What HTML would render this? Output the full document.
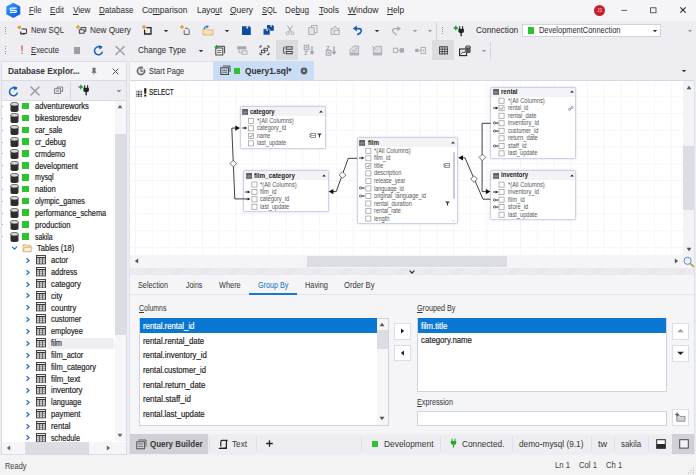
<!DOCTYPE html><html><head><meta charset="utf-8"><title>Query1.sql</title><style>
*{margin:0;padding:0;box-sizing:border-box}
html,body{width:696px;height:475px;overflow:hidden;background:#eeeef2}
body{position:relative;font-family:"Liberation Sans",sans-serif;font-size:9px;color:#1e1e1e}
.a{position:absolute}
.t{position:absolute;white-space:nowrap;transform-origin:0 50%;line-height:12px;height:12px;-webkit-text-stroke:0.2px currentColor}
.s{font-size:9.3px;color:#333;-webkit-text-stroke:0.05px currentColor}
.h{font-size:8.7px;color:#222;-webkit-text-stroke:0.18px currentColor}
.d{font-size:6.7px;color:#56565a;-webkit-text-stroke:0}
.g{-webkit-text-stroke:0.05px currentColor}
.b{font-weight:bold}
.w{color:#fff}
u{text-decoration:underline;text-underline-offset:0.6px;text-decoration-thickness:0.5px}
</style></head><body>
<div class="a" style="left:0px;top:0px;width:696px;height:21px;background:#f5f5f7"></div>
<svg class="a" style="left:5px;top:2px" width="17" height="17" viewBox="0 0 17 17"><defs><linearGradient id="lg" x1="0" y1="0" x2="1" y2="1"><stop offset="0" stop-color="#35a2ff"/><stop offset="1" stop-color="#0a55dd"/></linearGradient></defs><path d="M8.3 0.7 L15.3 4.5 L15.3 12.2 L8.3 16 L1.3 12.2 L1.3 4.5 Z" fill="url(#lg)"/><path d="M11.6 6.2 H6.4 Q5.1 6.2 5.1 7.25 Q5.1 8.3 6.4 8.3 H10.2 Q11.5 8.3 11.5 9.35 Q11.5 10.4 10.2 10.4 H5" fill="none" stroke="#fff" stroke-width="1.2"/></svg>
<div class="t s" style="left:29px;top:3.8px;transform:scaleX(0.834);"><u>F</u>ile</div>
<div class="t s" style="left:50px;top:3.8px;transform:scaleX(0.874);"><u>E</u>dit</div>
<div class="t s" style="left:73px;top:3.8px;transform:scaleX(0.875);"><u>V</u>iew</div>
<div class="t s" style="left:99px;top:3.8px;transform:scaleX(0.867);"><u>D</u>atabase</div>
<div class="t s" style="left:142px;top:3.8px;transform:scaleX(0.907);">Co<u>m</u>parison</div>
<div class="t s" style="left:197px;top:3.8px;transform:scaleX(0.895);">Layo<u>u</u>t</div>
<div class="t s" style="left:230px;top:3.8px;transform:scaleX(0.908);"><u>Q</u>uery</div>
<div class="t s" style="left:262px;top:3.8px;transform:scaleX(0.806);"><u>S</u>QL</div>
<div class="t s" style="left:285px;top:3.8px;transform:scaleX(0.876);">De<u>b</u>ug</div>
<div class="t s" style="left:319px;top:3.8px;transform:scaleX(0.921);"><u>T</u>ools</div>
<div class="t s" style="left:348px;top:3.8px;transform:scaleX(0.922);"><u>W</u>indow</div>
<div class="t s" style="left:387px;top:3.8px;transform:scaleX(0.889);"><u>H</u>elp</div>
<div class="a" style="left:594px;top:5px;width:11px;height:11px;background:#c4202f;border-radius:50%"></div>
<div class="t s" style="left:597px;top:4.6px;font-size:4.5px;color:#f0b8bd">JS</div>
<svg class="a" style="left:618px;top:4px" width="12" height="12" viewBox="0 0 12 12"><path d="M3.4 6.4H9" stroke="#3a3a3a" stroke-width="0.8"/></svg>
<svg class="a" style="left:647px;top:4px" width="12" height="12" viewBox="0 0 12 12"><rect x="3.6" y="3.8" width="5.4" height="5" fill="none" stroke="#3a3a3a" stroke-width="0.8"/></svg>
<svg class="a" style="left:676.8px;top:4.3px" width="12" height="12" viewBox="0 0 12 12"><path d="M3.3 3.3L8.7 8.7M8.7 3.3L3.3 8.7" stroke="#2a2a2a" stroke-width="1.1"/></svg>
<div class="a" style="left:0px;top:21px;width:696px;height:41px;background:#eeeef2"></div>
<div class="a" style="left:5px;top:26.5px;width:1px;height:1px;background:#8e8e96"></div>
<div class="a" style="left:5px;top:28.8px;width:1px;height:1px;background:#8e8e96"></div>
<div class="a" style="left:5px;top:31.1px;width:1px;height:1px;background:#8e8e96"></div>
<div class="a" style="left:5px;top:33.4px;width:1px;height:1px;background:#8e8e96"></div>
<div class="a" style="left:5px;top:46.0px;width:1px;height:1px;background:#8e8e96"></div>
<div class="a" style="left:5px;top:48.3px;width:1px;height:1px;background:#8e8e96"></div>
<div class="a" style="left:5px;top:50.6px;width:1px;height:1px;background:#8e8e96"></div>
<div class="a" style="left:5px;top:52.9px;width:1px;height:1px;background:#8e8e96"></div>
<div class="a" style="left:442px;top:26.5px;width:1px;height:1px;background:#8e8e96"></div>
<div class="a" style="left:442px;top:28.8px;width:1px;height:1px;background:#8e8e96"></div>
<div class="a" style="left:442px;top:31.1px;width:1px;height:1px;background:#8e8e96"></div>
<div class="a" style="left:442px;top:33.4px;width:1px;height:1px;background:#8e8e96"></div>
<svg class="a" style="left:16px;top:23.8px" width="12" height="12" viewBox="0 0 12 12"><path d="M3.4 1.0L4.39 2.21L5.6 3.2L4.39 4.19L3.4 5.4L2.4099999999999997 4.19L1.1999999999999997 3.2L2.4099999999999997 2.21Z" fill="#e8a33d"/><circle cx="3.4" cy="3.2" r="1.54" fill="#e8a33d"/><path d="M5.6 5H10.4V9.4H6.4" fill="#f8f8fa" stroke="#2a2a2a" stroke-width="1"/><path d="M4.8 7.6V9.9H8.8" fill="none" stroke="#2a2a2a" stroke-width="1.1"/></svg>
<div class="t s" style="left:31px;top:23.9px;transform:scaleX(0.829);">New SQL</div>
<svg class="a" style="left:75px;top:23.8px" width="12" height="12" viewBox="0 0 12 12"><path d="M3 0.7999999999999998L3.99 2.01L5.2 3L3.99 3.99L3 5.2L2.01 3.99L0.7999999999999998 3L2.01 2.01Z" fill="#e8a33d"/><circle cx="3" cy="3" r="1.54" fill="#e8a33d"/><rect x="6" y="3.6" width="4.8" height="3.6" fill="#eeeef2" stroke="#333" stroke-width="0.9"/><rect x="4.3" y="5.8" width="4.8" height="3.4" fill="#eeeef2" stroke="#333" stroke-width="0.9"/></svg>
<div class="t s" style="left:89.5px;top:23.9px;transform:scaleX(0.881);">New Query</div>
<svg class="a" style="left:141px;top:23.8px" width="12" height="12" viewBox="0 0 12 12"><path d="M3 0.7999999999999998L3.99 2.01L5.2 3L3.99 3.99L3 5.2L2.01 3.99L0.7999999999999998 3L2.01 2.01Z" fill="#e8a33d"/><circle cx="3" cy="3" r="1.54" fill="#e8a33d"/><path d="M5.5 3.6H10V10H3.6V5.8" fill="none" stroke="#222" stroke-width="1.3"/></svg>
<svg class="a" style="left:162px;top:27.5px" width="8" height="6" viewBox="0 0 8 6"><path d="M1.7 2.0H6.3L4 4.3Z" fill="#333"/></svg>
<svg class="a" style="left:179px;top:23.8px" width="12" height="12" viewBox="0 0 12 12"><path d="M3 0.7999999999999998L3.99 2.01L5.2 3L3.99 3.99L3 5.2L2.01 3.99L0.7999999999999998 3L2.01 2.01Z" fill="#e8a33d"/><circle cx="3" cy="3" r="1.54" fill="#e8a33d"/><path d="M6 4.3H8.6L10.2 6V10.4H5.2V6" fill="none" stroke="#444" stroke-width="0.8"/></svg>
<svg class="a" style="left:201px;top:23.8px" width="14" height="12" viewBox="0 0 14 12"><path d="M2 5H6L7 6H12V11H2Z" fill="#f7e2b8" stroke="#dcae62" stroke-width="0.8"/><path d="M3.2 5.2Q3.2 2.3 6.3 2.6" fill="none" stroke="#1c6fd0" stroke-width="1.1"/><path d="M5.6 1L8 2.7L5.6 4.2Z" fill="#1c6fd0"/></svg>
<svg class="a" style="left:222.5px;top:27.5px" width="8" height="6" viewBox="0 0 8 6"><path d="M1.7 2.0H6.3L4 4.3Z" fill="#333"/></svg>
<svg class="a" style="left:241px;top:23.8px" width="12" height="12" viewBox="0 0 12 12"><path d="M1 2.2H8.4L9.8 3.6V11H1Z" fill="#0c4da2"/><rect x="5.6" y="2.2" width="1.5" height="2.3" fill="#eeeef2"/></svg>
<svg class="a" style="left:262px;top:23.8px" width="13" height="12" viewBox="0 0 13 12"><path d="M5 1H10.5L11.8 2.3V6.8H5Z" fill="#0c4da2"/><rect x="8.4" y="1" width="1.3" height="1.8" fill="#eeeef2"/><path d="M1.2 4.8H6.6L8 6.2V11H1.2Z" fill="#0c4da2" stroke="#eeeef2" stroke-width="0.6"/><rect x="4.4" y="5.2" width="1.3" height="1.8" fill="#eeeef2"/></svg>
<svg class="a" style="left:284px;top:23.8px" width="12" height="12" viewBox="0 0 12 12"><path d="M3.5 1.5L7.5 8M8.5 1.5L4.5 8" stroke="#a8a8ae" stroke-width="1"/><circle cx="3.6" cy="9.3" r="1.5" fill="none" stroke="#a8a8ae" stroke-width="0.9"/><circle cx="8.4" cy="9.3" r="1.5" fill="none" stroke="#a8a8ae" stroke-width="0.9"/></svg>
<svg class="a" style="left:307px;top:23.8px" width="12" height="12" viewBox="0 0 12 12"><rect x="4.5" y="1.5" width="5.5" height="7" fill="#eeeef2" stroke="#a8a8ae" stroke-width="0.9"/><rect x="1.8" y="3.6" width="5.5" height="7" fill="#e4e4e8" stroke="#a8a8ae" stroke-width="0.9"/></svg>
<svg class="a" style="left:329px;top:23.8px" width="12" height="12" viewBox="0 0 12 12"><path d="M2 10.5V4.5H4L6 2L8 4.5H10V10.5Z" fill="#e0e0e4" stroke="#a8a8ae" stroke-width="0.9"/><rect x="5.4" y="6.4" width="4.6" height="4.1" fill="#eeeef2" stroke="#a8a8ae" stroke-width="0.8"/></svg>
<svg class="a" style="left:352px;top:23.8px" width="12" height="12" viewBox="0 0 12 12"><path d="M3.2 4.6H7Q9.6 4.8 9.3 7.2Q8.8 9.2 5.2 10.8" fill="none" stroke="#1560c0" stroke-width="1.6"/><path d="M0.8 4.6L4.8 1.6V7.6Z" fill="#1560c0"/></svg>
<svg class="a" style="left:372.5px;top:27.5px" width="8" height="6" viewBox="0 0 8 6"><path d="M1.7 2.0H6.3L4 4.3Z" fill="#333"/></svg>
<svg class="a" style="left:390px;top:23.8px" width="12" height="12" viewBox="0 0 12 12"><path d="M8.8 4.6H5Q2.4 4.8 2.7 7.2Q3.2 9.2 6.8 10.8" fill="none" stroke="#a8a8ae" stroke-width="1.4"/><path d="M11 4.6L7.4 2V7.2Z" fill="#a8a8ae"/></svg>
<svg class="a" style="left:410.5px;top:27.5px" width="8" height="6" viewBox="0 0 8 6"><path d="M1.7 2.0H6.3L4 4.3Z" fill="#9a9aa0"/></svg>
<svg class="a" style="left:426px;top:27.8px" width="8" height="6" viewBox="0 0 8 6"><path d="M1.7 2.0H6.3L4 4.3Z" fill="#9a9aa0"/></svg>
<div class="a" style="left:436px;top:22px;width:1px;height:19px;background:#d4d4dc"></div>
<svg class="a" style="left:453.4px;top:24.8px" width="13" height="12" viewBox="0 0 13 12"><path d="M0.6 3H5M2.8 0.8V5.2" stroke="#1a9c2c" stroke-width="1.4"/><path d="M6.7 1.2V4M9.6 1.2V4" stroke="#222" stroke-width="1"/><path d="M5.4 3.8H10.9V6.2Q10.9 7.6 9.3 8H7Q5.4 7.6 5.4 6.2Z" fill="#222"/><path d="M8.15 8V11.2" stroke="#222" stroke-width="1.4"/></svg>
<div class="t s" style="left:475.8px;top:23.9px;transform:scaleX(0.897);">Connection</div>
<div class="a" style="left:522px;top:24.4px;width:139px;height:12.4px;background:#fff;border:1px solid #d0d2e2"></div>
<div class="a" style="left:527.8px;top:27.4px;width:6.7px;height:6.8px;background:#2ec22e"></div>
<div class="t s" style="left:538.5px;top:24.0px;transform:scaleX(0.800);">DevelopmentConnection</div>
<svg class="a" style="left:651px;top:28px" width="8" height="6" viewBox="0 0 8 6"><path d="M1.7 2.0H6.3L4 4.3Z" fill="#333"/></svg>
<svg class="a" style="left:685.5px;top:28px" width="8" height="6" viewBox="0 0 8 6"><path d="M1.7 2.0H6.3L4 4.3Z" fill="#9a9aa0"/></svg>
<svg class="a" style="left:19px;top:44px" width="6" height="12" viewBox="0 0 6 12"><path d="M2.45 1.6H3.55L3.35 7.6H2.65Z" fill="#c9211e"/><rect x="2.5" y="8.7" width="1" height="1.3" fill="#c9211e"/></svg>
<div class="t s" style="left:31px;top:44.0px;transform:scaleX(0.833);"><u>E</u>xecute</div>
<div class="a" style="left:73.5px;top:47px;width:6.5px;height:6.5px;background:#9d9da3"></div>
<svg class="a" style="left:92px;top:44px" width="13" height="13" viewBox="0 0 13 13"><path d="M9.6 4.3A4 4 0 1 0 10.4 7.6" fill="none" stroke="#1560c0" stroke-width="1.5"/><path d="M6.4 1L10.6 2.6L7.6 5.6Z" fill="#1560c0"/></svg>
<svg class="a" style="left:114px;top:44px" width="12" height="12" viewBox="0 0 12 12"><path d="M1.6 2L10.6 11M10.6 2L1.6 11" stroke="#a0a0a6" stroke-width="1.5"/></svg>
<div class="t s" style="left:138px;top:44.0px;transform:scaleX(0.870);">Change Type</div>
<svg class="a" style="left:197px;top:47.5px" width="8" height="6" viewBox="0 0 8 6"><path d="M1.7 2.0H6.3L4 4.3Z" fill="#333"/></svg>
<svg class="a" style="left:214px;top:44px" width="13" height="13" viewBox="0 0 13 13"><path d="M3.4 2.3H10.6V9.4" fill="none" stroke="#333" stroke-width="0.9"/><rect x="1.8" y="4" width="7" height="7" fill="#f6f6f8" stroke="#333" stroke-width="0.9"/><path d="M3.2 6.6H7.4M3.2 8.6H7.4" stroke="#444" stroke-width="0.8"/><path d="M0.6 3H4.6M2.6 1V5" stroke="#1f9d2f" stroke-width="1.3"/></svg>
<svg class="a" style="left:236px;top:44px" width="13" height="13" viewBox="0 0 13 13"><rect x="1.2" y="2.2" width="9.2" height="3.2" fill="#a8a8ae"/><path d="M3 5.4V8.6H6" fill="none" stroke="#a8a8ae" stroke-width="0.9"/><rect x="6" y="6.8" width="5" height="3.4" fill="#eeeef2" stroke="#a8a8ae" stroke-width="0.9"/></svg>
<svg class="a" style="left:258px;top:44px" width="13" height="13" viewBox="0 0 13 13"><path d="M2 4V2H4M9 2H11V4M11 8.6V10.6H9M4 10.6H2V8.6" fill="none" stroke="#333" stroke-width="0.9"/><rect x="6" y="4.2" width="3.4" height="2.6" fill="none" stroke="#333" stroke-width="0.8"/><rect x="3.4" y="6.2" width="3.4" height="2.6" fill="#eeeef2" stroke="#333" stroke-width="0.8"/></svg>
<div class="a" style="left:276px;top:40px;width:22px;height:19.5px;background:#dcdce0"></div>
<svg class="a" style="left:281px;top:44px" width="13" height="13" viewBox="0 0 13 13"><path d="M3.2 2.6Q1.6 6.3 3.2 10" fill="none" stroke="#333" stroke-width="0.9"/><rect x="5.2" y="2.8" width="6" height="2.4" fill="none" stroke="#333" stroke-width="0.9"/><rect x="5.2" y="7.4" width="6" height="2.4" fill="none" stroke="#333" stroke-width="0.9"/></svg>
<svg class="a" style="left:303px;top:44px" width="13" height="13" viewBox="0 0 13 13"><rect x="1.2" y="1.2" width="4.6" height="4.6" fill="none" stroke="#a2a2a8" stroke-width="1"/><rect x="2.6" y="2.5999999999999996" width="1.8" height="1.8" fill="#a2a2a8"/><text x="1.2" y="11.4" font-size="5.8" font-weight="bold" fill="#a2a2a8" font-family="Liberation Sans,sans-serif">Z</text><path d="M9 2.2V9.6" stroke="#a2a2a8" stroke-width="1.3"/><path d="M6.4 7.4L9 11L11.6 7.4Z" fill="#a2a2a8"/></svg>
<svg class="a" style="left:325px;top:44px" width="13" height="13" viewBox="0 0 13 13"><rect x="1.2" y="6.6" width="4.6" height="4.6" fill="none" stroke="#a2a2a8" stroke-width="1"/><rect x="2.6" y="8.0" width="1.8" height="1.8" fill="#a2a2a8"/><text x="1.2" y="5.6" font-size="5.8" font-weight="bold" fill="#a2a2a8" font-family="Liberation Sans,sans-serif">Z</text><path d="M9 2.2V9.6" stroke="#a2a2a8" stroke-width="1.3"/><path d="M6.4 7.4L9 11L11.6 7.4Z" fill="#a2a2a8"/></svg>
<svg class="a" style="left:348px;top:44px" width="13" height="13" viewBox="0 0 13 13"><path d="M2 11V5.6L5.6 2H10.6V11Z" fill="#dedee2" stroke="#a8a8ae" stroke-width="0.9"/><path d="M4 6L6 8L9 3.6" fill="none" stroke="#a8a8ae" stroke-width="0.9"/><path d="M2 9.6H10.6" stroke="#a8a8ae" stroke-width="1.6"/></svg>
<svg class="a" style="left:371px;top:44px" width="13" height="13" viewBox="0 0 13 13"><path d="M2.4 11V4.6L4.8 2.4H10.6V11Z" fill="#dedee2" stroke="#a8a8ae" stroke-width="0.9"/><path d="M1 2L5.5 6" stroke="#a8a8ae" stroke-width="0.9"/><path d="M2.4 9.6H10.6" stroke="#a8a8ae" stroke-width="1.6"/></svg>
<svg class="a" style="left:392px;top:44px" width="13" height="13" viewBox="0 0 13 13"><rect x="1.4" y="4.2" width="4" height="4.4" fill="none" stroke="#a8a8ae" stroke-width="0.9"/><rect x="7.6" y="4.2" width="4.4" height="4.4" fill="#a8a8ae"/><path d="M5.4 6.4H7.6" stroke="#a8a8ae" stroke-width="0.9"/></svg>
<svg class="a" style="left:414px;top:44px" width="13" height="13" viewBox="0 0 13 13"><rect x="1.2" y="4.8" width="3.4" height="3.2" fill="#a8a8ae"/><path d="M4.6 6.4H7" stroke="#a8a8ae" stroke-width="0.9"/><rect x="7" y="3.4" width="4.6" height="6" fill="none" stroke="#a8a8ae" stroke-width="0.9"/><path d="M8.4 6.4L10.2 5V7.8Z" fill="#a8a8ae"/></svg>
<div class="a" style="left:432px;top:40px;width:22px;height:19.5px;background:#dcdce0"></div>
<svg class="a" style="left:437px;top:44px" width="13" height="13" viewBox="0 0 13 13"><rect x="2.6" y="2.8" width="7.8" height="7.2" fill="none" stroke="#333" stroke-width="0.9"/><path d="M2.6 5.2H10.4M2.6 7.6H10.4M5.2 2.8V10M7.8 2.8V10" stroke="#333" stroke-width="0.8"/></svg>
<svg class="a" style="left:458px;top:43.5px" width="14" height="14" viewBox="0 0 14 14"><rect x="1.6" y="5" width="7" height="6.6" fill="#eeeef2" stroke="#222" stroke-width="1.1"/><path d="M2.6 10.4L5 7.8L6.2 9L8 6.4" fill="none" stroke="#222" stroke-width="0.8"/><path d="M7.4 3V8.6Q10 9.6 12.6 8.6V3" fill="#555"/><ellipse cx="10" cy="3" rx="2.6" ry="1.3" fill="#999" stroke="#333" stroke-width="0.6"/></svg>
<svg class="a" style="left:479.5px;top:47.5px" width="8" height="6" viewBox="0 0 8 6"><path d="M1.7 2.0H6.3L4 4.3Z" fill="#9a9aa0"/></svg>
<div class="a" style="left:490px;top:42px;width:1px;height:18px;background:#d4d4dc"></div>
<div class="a" style="left:1px;top:61px;width:125.5px;height:393.5px;background:#fff;border:1px solid #d9dbe9"></div>
<div class="a" style="left:2px;top:62px;width:123.5px;height:18.5px;background:#f5f5f7"></div>
<div class="a" style="left:1px;top:80px;width:125.5px;height:20.5px;background:#eeeef2;border:1px solid #d9dbe9"></div>
<div class="t s b" style="left:7.6px;top:65.3px;transform:scaleX(0.895);color:#3a3a3e">Database Explor...</div>
<svg class="a" style="left:89.6px;top:67.3px" width="8" height="9" viewBox="0 0 8 9"><path d="M2.2 1.3H5.8M2.9 1.3V4.4L1.8 5.4H6.2L5.1 4.4V1.3Z" fill="#77777c" stroke="#66666a" stroke-width="0.6"/><path d="M4 5.4V7.6" stroke="#66666a" stroke-width="0.8"/></svg>
<svg class="a" style="left:111.3px;top:66.5px" width="9" height="9" viewBox="0 0 9 9"><path d="M1.7 1.7L7.3 7.3M7.3 1.7L1.7 7.3" stroke="#48484c" stroke-width="0.95"/></svg>
<svg class="a" style="left:7px;top:84.5px" width="13" height="13" viewBox="0 0 13 13"><path d="M9.6 4.3A4 4 0 1 0 10.4 7.6" fill="none" stroke="#1560c0" stroke-width="1.5"/><path d="M6.4 1L10.6 2.6L7.6 5.6Z" fill="#1560c0"/></svg>
<svg class="a" style="left:29px;top:84.7px" width="12" height="12" viewBox="0 0 12 12"><path d="M1.6 1.6L10.4 10.4M10.4 1.6L1.6 10.4" stroke="#a0a0a6" stroke-width="1.5"/></svg>
<svg class="a" style="left:52.5px;top:85px" width="11" height="11" viewBox="0 0 11 11"><path d="M4.2 3.6V2H9.6V6.4H8" fill="none" stroke="#666" stroke-width="0.8"/><rect x="1.6" y="3.8" width="6" height="4.6" fill="#eeeef2" stroke="#666" stroke-width="0.8"/><path d="M3.2 6.1H6" stroke="#2a6fd0" stroke-width="1"/></svg>
<div class="a" style="left:70px;top:82px;width:1px;height:17px;background:#d4d4de"></div>
<svg class="a" style="left:77.6px;top:83.9px" width="13" height="12" viewBox="0 0 13 12"><path d="M0.6 3H5M2.8 0.8V5.2" stroke="#1a9c2c" stroke-width="1.4"/><path d="M6.7 1.2V4M9.6 1.2V4" stroke="#222" stroke-width="1"/><path d="M5.4 3.8H10.9V6.2Q10.9 7.6 9.3 8H7Q5.4 7.6 5.4 6.2Z" fill="#222"/><path d="M8.15 8V11.2" stroke="#222" stroke-width="1.4"/></svg>
<svg class="a" style="left:115px;top:87.6px" width="8" height="6" viewBox="0 0 8 6"><path d="M1.4999999999999998 1.9H6.5L4 4.3999999999999995Z" fill="#8e8e94"/></svg>
<div class="a" style="left:114.5px;top:101px;width:11px;height:340px;background:#f6f6f8"></div>
<div class="a" style="left:114.5px;top:134px;width:11px;height:201px;background:#dcdce3"></div>
<svg class="a" style="left:117px;top:104px" width="6" height="5" viewBox="0 0 6 5"><path d="M0.6 4.2H5.4L3 0.8Z" fill="#666"/></svg>
<svg class="a" style="left:117px;top:433px" width="6" height="5" viewBox="0 0 6 5"><path d="M0.6 0.8H5.4L3 4.2Z" fill="#666"/></svg>
<div class="a" style="left:2px;top:441.5px;width:123.5px;height:12px;background:#f6f6f8"></div>
<div class="a" style="left:25px;top:441.5px;width:64px;height:12px;background:#dcdce3"></div>
<svg class="a" style="left:6px;top:444.5px" width="5" height="6" viewBox="0 0 5 6"><path d="M4.2 0.6V5.4L0.8 3Z" fill="#666"/></svg>
<svg class="a" style="left:105.5px;top:444.5px" width="5" height="6" viewBox="0 0 5 6"><path d="M0.8 0.6V5.4L4.2 3Z" fill="#666"/></svg>
<div class="a" style="left:2.2px;top:106.0px;width:0.8px;height:1px;background:#7ab4ea"></div>
<svg class="a" style="left:9.8px;top:101.5px" width="9" height="10.6" viewBox="0 0 9 10.6"><path d="M0.5 2.2V8.4Q0.5 10.1 4.5 10.1Q8.5 10.1 8.5 8.4V2.2Z" fill="#2e2e2e"/><ellipse cx="4.5" cy="2.2" rx="4" ry="1.8" fill="#d8d8d8" stroke="#2e2e2e" stroke-width="0.7"/></svg>
<div class="a" style="left:22.2px;top:102.89999999999999px;width:6.6px;height:6.6px;background:#2ec22e"></div>
<div class="t h" style="left:35.3px;top:100.3px;transform:scaleX(0.879);">adventureworks</div>
<div class="a" style="left:2.2px;top:117.835px;width:0.8px;height:1px;background:#7ab4ea"></div>
<svg class="a" style="left:9.8px;top:113.335px" width="9" height="10.6" viewBox="0 0 9 10.6"><path d="M0.5 2.2V8.4Q0.5 10.1 4.5 10.1Q8.5 10.1 8.5 8.4V2.2Z" fill="#2e2e2e"/><ellipse cx="4.5" cy="2.2" rx="4" ry="1.8" fill="#d8d8d8" stroke="#2e2e2e" stroke-width="0.7"/></svg>
<div class="a" style="left:22.2px;top:114.73499999999999px;width:6.6px;height:6.6px;background:#2ec22e"></div>
<div class="t h" style="left:35.3px;top:112.1px;transform:scaleX(0.863);">bikestoresdev</div>
<div class="a" style="left:2.2px;top:129.67px;width:0.8px;height:1px;background:#7ab4ea"></div>
<svg class="a" style="left:9.8px;top:125.17px" width="9" height="10.6" viewBox="0 0 9 10.6"><path d="M0.5 2.2V8.4Q0.5 10.1 4.5 10.1Q8.5 10.1 8.5 8.4V2.2Z" fill="#2e2e2e"/><ellipse cx="4.5" cy="2.2" rx="4" ry="1.8" fill="#d8d8d8" stroke="#2e2e2e" stroke-width="0.7"/></svg>
<div class="a" style="left:22.2px;top:126.57px;width:6.6px;height:6.6px;background:#2ec22e"></div>
<div class="t h" style="left:35.3px;top:124.0px;transform:scaleX(0.830);">car_sale</div>
<div class="a" style="left:2.2px;top:141.505px;width:0.8px;height:1px;background:#7ab4ea"></div>
<svg class="a" style="left:9.8px;top:137.005px" width="9" height="10.6" viewBox="0 0 9 10.6"><path d="M0.5 2.2V8.4Q0.5 10.1 4.5 10.1Q8.5 10.1 8.5 8.4V2.2Z" fill="#2e2e2e"/><ellipse cx="4.5" cy="2.2" rx="4" ry="1.8" fill="#d8d8d8" stroke="#2e2e2e" stroke-width="0.7"/></svg>
<div class="a" style="left:22.2px;top:138.405px;width:6.6px;height:6.6px;background:#2ec22e"></div>
<div class="t h" style="left:35.3px;top:135.8px;transform:scaleX(0.854);">cr_debug</div>
<div class="a" style="left:2.2px;top:153.33999999999997px;width:0.8px;height:1px;background:#7ab4ea"></div>
<svg class="a" style="left:9.8px;top:148.83999999999997px" width="9" height="10.6" viewBox="0 0 9 10.6"><path d="M0.5 2.2V8.4Q0.5 10.1 4.5 10.1Q8.5 10.1 8.5 8.4V2.2Z" fill="#2e2e2e"/><ellipse cx="4.5" cy="2.2" rx="4" ry="1.8" fill="#d8d8d8" stroke="#2e2e2e" stroke-width="0.7"/></svg>
<div class="a" style="left:22.2px;top:150.23999999999998px;width:6.6px;height:6.6px;background:#2ec22e"></div>
<div class="t h" style="left:35.3px;top:147.6px;transform:scaleX(0.827);">crmdemo</div>
<div class="a" style="left:2.2px;top:165.17499999999998px;width:0.8px;height:1px;background:#7ab4ea"></div>
<svg class="a" style="left:9.8px;top:160.67499999999998px" width="9" height="10.6" viewBox="0 0 9 10.6"><path d="M0.5 2.2V8.4Q0.5 10.1 4.5 10.1Q8.5 10.1 8.5 8.4V2.2Z" fill="#2e2e2e"/><ellipse cx="4.5" cy="2.2" rx="4" ry="1.8" fill="#d8d8d8" stroke="#2e2e2e" stroke-width="0.7"/></svg>
<div class="a" style="left:22.2px;top:162.075px;width:6.6px;height:6.6px;background:#2ec22e"></div>
<div class="t h" style="left:35.3px;top:159.5px;transform:scaleX(0.863);">development</div>
<div class="a" style="left:2.2px;top:177.01px;width:0.8px;height:1px;background:#7ab4ea"></div>
<svg class="a" style="left:9.8px;top:172.51px" width="9" height="10.6" viewBox="0 0 9 10.6"><path d="M0.5 2.2V8.4Q0.5 10.1 4.5 10.1Q8.5 10.1 8.5 8.4V2.2Z" fill="#2e2e2e"/><ellipse cx="4.5" cy="2.2" rx="4" ry="1.8" fill="#d8d8d8" stroke="#2e2e2e" stroke-width="0.7"/></svg>
<div class="a" style="left:22.2px;top:173.91px;width:6.6px;height:6.6px;background:#2ec22e"></div>
<div class="t h" style="left:35.3px;top:171.3px;transform:scaleX(0.814);">mysql</div>
<div class="a" style="left:2.2px;top:188.84499999999997px;width:0.8px;height:1px;background:#7ab4ea"></div>
<svg class="a" style="left:9.8px;top:184.34499999999997px" width="9" height="10.6" viewBox="0 0 9 10.6"><path d="M0.5 2.2V8.4Q0.5 10.1 4.5 10.1Q8.5 10.1 8.5 8.4V2.2Z" fill="#2e2e2e"/><ellipse cx="4.5" cy="2.2" rx="4" ry="1.8" fill="#d8d8d8" stroke="#2e2e2e" stroke-width="0.7"/></svg>
<div class="a" style="left:22.2px;top:185.74499999999998px;width:6.6px;height:6.6px;background:#2ec22e"></div>
<div class="t h" style="left:35.3px;top:183.1px;transform:scaleX(0.873);">nation</div>
<div class="a" style="left:2.2px;top:200.68px;width:0.8px;height:1px;background:#7ab4ea"></div>
<svg class="a" style="left:9.8px;top:196.18px" width="9" height="10.6" viewBox="0 0 9 10.6"><path d="M0.5 2.2V8.4Q0.5 10.1 4.5 10.1Q8.5 10.1 8.5 8.4V2.2Z" fill="#2e2e2e"/><ellipse cx="4.5" cy="2.2" rx="4" ry="1.8" fill="#d8d8d8" stroke="#2e2e2e" stroke-width="0.7"/></svg>
<div class="a" style="left:22.2px;top:197.58px;width:6.6px;height:6.6px;background:#2ec22e"></div>
<div class="t h" style="left:35.3px;top:195.0px;transform:scaleX(0.824);">olympic_games</div>
<div class="a" style="left:2.2px;top:212.515px;width:0.8px;height:1px;background:#7ab4ea"></div>
<svg class="a" style="left:9.8px;top:208.015px" width="9" height="10.6" viewBox="0 0 9 10.6"><path d="M0.5 2.2V8.4Q0.5 10.1 4.5 10.1Q8.5 10.1 8.5 8.4V2.2Z" fill="#2e2e2e"/><ellipse cx="4.5" cy="2.2" rx="4" ry="1.8" fill="#d8d8d8" stroke="#2e2e2e" stroke-width="0.7"/></svg>
<div class="a" style="left:22.2px;top:209.415px;width:6.6px;height:6.6px;background:#2ec22e"></div>
<div class="t h" style="left:35.3px;top:206.8px;transform:scaleX(0.847);">performance_schema</div>
<div class="a" style="left:2.2px;top:224.35px;width:0.8px;height:1px;background:#7ab4ea"></div>
<svg class="a" style="left:9.8px;top:219.85px" width="9" height="10.6" viewBox="0 0 9 10.6"><path d="M0.5 2.2V8.4Q0.5 10.1 4.5 10.1Q8.5 10.1 8.5 8.4V2.2Z" fill="#2e2e2e"/><ellipse cx="4.5" cy="2.2" rx="4" ry="1.8" fill="#d8d8d8" stroke="#2e2e2e" stroke-width="0.7"/></svg>
<div class="a" style="left:22.2px;top:221.25px;width:6.6px;height:6.6px;background:#2ec22e"></div>
<div class="t h" style="left:35.3px;top:218.7px;transform:scaleX(0.871);">production</div>
<div class="a" style="left:2.2px;top:236.185px;width:0.8px;height:1px;background:#7ab4ea"></div>
<svg class="a" style="left:9.8px;top:231.685px" width="9" height="10.6" viewBox="0 0 9 10.6"><path d="M0.5 2.2V8.4Q0.5 10.1 4.5 10.1Q8.5 10.1 8.5 8.4V2.2Z" fill="#2e2e2e"/><ellipse cx="4.5" cy="2.2" rx="4" ry="1.8" fill="#d8d8d8" stroke="#2e2e2e" stroke-width="0.7"/></svg>
<div class="a" style="left:22.2px;top:233.085px;width:6.6px;height:6.6px;background:#2ec22e"></div>
<div class="t h" style="left:35.3px;top:230.5px;transform:scaleX(0.796);">sakila</div>
<svg class="a" style="left:11px;top:245.32px" width="7" height="6" viewBox="0 0 7 6"><path d="M1 1.6L3.5 4.2L6 1.6" fill="none" stroke="#1c6fd0" stroke-width="1.1"/></svg>
<svg class="a" style="left:22px;top:243.32px" width="11" height="10" viewBox="0 0 11 10"><path d="M1 8.6V1.6H4L5 2.6H9V8.6Z" fill="#f3dfb8" stroke="#d6a95c" stroke-width="0.7"/><path d="M1 8.6L2.6 4.4H10L9 8.6Z" fill="#fbf3e0" stroke="#d6a95c" stroke-width="0.7"/></svg>
<div class="t h" style="left:37.4px;top:242.3px;transform:scaleX(0.867);">Tables (18)</div>
<svg class="a" style="left:25px;top:256.95500000000004px" width="6" height="7" viewBox="0 0 6 7"><path d="M1.6 1.3L4 3.5L1.6 5.7" fill="none" stroke="#1c6fd0" stroke-width="1.2"/></svg>
<svg class="a" style="left:36px;top:255.15500000000003px" width="10" height="9.6" viewBox="0 0 10 9.6"><rect x="0.5" y="0.5" width="9" height="8.4" fill="#fff" stroke="#333" stroke-width="0.9"/><path d="M0.5 2.6H9.5" stroke="#333" stroke-width="1.4"/><path d="M0.5 4.9H9.5M0.5 6.9H9.5M3.5 2.6V9M6.5 2.6V9" stroke="#444" stroke-width="0.75"/></svg>
<div class="t h" style="left:50.5px;top:254.2px;transform:scaleX(0.889);">actor</div>
<svg class="a" style="left:25px;top:268.79px" width="6" height="7" viewBox="0 0 6 7"><path d="M1.6 1.3L4 3.5L1.6 5.7" fill="none" stroke="#1c6fd0" stroke-width="1.2"/></svg>
<svg class="a" style="left:36px;top:266.99px" width="10" height="9.6" viewBox="0 0 10 9.6"><rect x="0.5" y="0.5" width="9" height="8.4" fill="#fff" stroke="#333" stroke-width="0.9"/><path d="M0.5 2.6H9.5" stroke="#333" stroke-width="1.4"/><path d="M0.5 4.9H9.5M0.5 6.9H9.5M3.5 2.6V9M6.5 2.6V9" stroke="#444" stroke-width="0.75"/></svg>
<div class="t h" style="left:50.5px;top:266.0px;transform:scaleX(0.850);">address</div>
<svg class="a" style="left:25px;top:280.625px" width="6" height="7" viewBox="0 0 6 7"><path d="M1.6 1.3L4 3.5L1.6 5.7" fill="none" stroke="#1c6fd0" stroke-width="1.2"/></svg>
<svg class="a" style="left:36px;top:278.825px" width="10" height="9.6" viewBox="0 0 10 9.6"><rect x="0.5" y="0.5" width="9" height="8.4" fill="#fff" stroke="#333" stroke-width="0.9"/><path d="M0.5 2.6H9.5" stroke="#333" stroke-width="1.4"/><path d="M0.5 4.9H9.5M0.5 6.9H9.5M3.5 2.6V9M6.5 2.6V9" stroke="#444" stroke-width="0.75"/></svg>
<div class="t h" style="left:50.5px;top:277.8px;transform:scaleX(0.893);">category</div>
<svg class="a" style="left:25px;top:292.46000000000004px" width="6" height="7" viewBox="0 0 6 7"><path d="M1.6 1.3L4 3.5L1.6 5.7" fill="none" stroke="#1c6fd0" stroke-width="1.2"/></svg>
<svg class="a" style="left:36px;top:290.66px" width="10" height="9.6" viewBox="0 0 10 9.6"><rect x="0.5" y="0.5" width="9" height="8.4" fill="#fff" stroke="#333" stroke-width="0.9"/><path d="M0.5 2.6H9.5" stroke="#333" stroke-width="1.4"/><path d="M0.5 4.9H9.5M0.5 6.9H9.5M3.5 2.6V9M6.5 2.6V9" stroke="#444" stroke-width="0.75"/></svg>
<div class="t h" style="left:50.5px;top:289.7px;transform:scaleX(0.874);">city</div>
<svg class="a" style="left:25px;top:304.295px" width="6" height="7" viewBox="0 0 6 7"><path d="M1.6 1.3L4 3.5L1.6 5.7" fill="none" stroke="#1c6fd0" stroke-width="1.2"/></svg>
<svg class="a" style="left:36px;top:302.495px" width="10" height="9.6" viewBox="0 0 10 9.6"><rect x="0.5" y="0.5" width="9" height="8.4" fill="#fff" stroke="#333" stroke-width="0.9"/><path d="M0.5 2.6H9.5" stroke="#333" stroke-width="1.4"/><path d="M0.5 4.9H9.5M0.5 6.9H9.5M3.5 2.6V9M6.5 2.6V9" stroke="#444" stroke-width="0.75"/></svg>
<div class="t h" style="left:50.5px;top:301.5px;transform:scaleX(0.887);">country</div>
<svg class="a" style="left:25px;top:316.13000000000005px" width="6" height="7" viewBox="0 0 6 7"><path d="M1.6 1.3L4 3.5L1.6 5.7" fill="none" stroke="#1c6fd0" stroke-width="1.2"/></svg>
<svg class="a" style="left:36px;top:314.33000000000004px" width="10" height="9.6" viewBox="0 0 10 9.6"><rect x="0.5" y="0.5" width="9" height="8.4" fill="#fff" stroke="#333" stroke-width="0.9"/><path d="M0.5 2.6H9.5" stroke="#333" stroke-width="1.4"/><path d="M0.5 4.9H9.5M0.5 6.9H9.5M3.5 2.6V9M6.5 2.6V9" stroke="#444" stroke-width="0.75"/></svg>
<div class="t h" style="left:50.5px;top:313.3px;transform:scaleX(0.847);">customer</div>
<svg class="a" style="left:25px;top:327.96500000000003px" width="6" height="7" viewBox="0 0 6 7"><path d="M1.6 1.3L4 3.5L1.6 5.7" fill="none" stroke="#1c6fd0" stroke-width="1.2"/></svg>
<svg class="a" style="left:36px;top:326.165px" width="10" height="9.6" viewBox="0 0 10 9.6"><rect x="0.5" y="0.5" width="9" height="8.4" fill="#fff" stroke="#333" stroke-width="0.9"/><path d="M0.5 2.6H9.5" stroke="#333" stroke-width="1.4"/><path d="M0.5 4.9H9.5M0.5 6.9H9.5M3.5 2.6V9M6.5 2.6V9" stroke="#444" stroke-width="0.75"/></svg>
<div class="t h" style="left:50.5px;top:325.2px;transform:scaleX(0.843);">employee</div>
<div class="a" style="left:48px;top:337.5px;width:66px;height:11.2px;background:#eeeef2"></div>
<svg class="a" style="left:25px;top:339.8px" width="6" height="7" viewBox="0 0 6 7"><path d="M1.6 1.3L4 3.5L1.6 5.7" fill="none" stroke="#1c6fd0" stroke-width="1.2"/></svg>
<svg class="a" style="left:36px;top:338.0px" width="10" height="9.6" viewBox="0 0 10 9.6"><rect x="0.5" y="0.5" width="9" height="8.4" fill="#fff" stroke="#333" stroke-width="0.9"/><path d="M0.5 2.6H9.5" stroke="#333" stroke-width="1.4"/><path d="M0.5 4.9H9.5M0.5 6.9H9.5M3.5 2.6V9M6.5 2.6V9" stroke="#444" stroke-width="0.75"/></svg>
<div class="t h" style="left:50.5px;top:337.0px;transform:scaleX(0.806);">film</div>
<svg class="a" style="left:25px;top:351.63500000000005px" width="6" height="7" viewBox="0 0 6 7"><path d="M1.6 1.3L4 3.5L1.6 5.7" fill="none" stroke="#1c6fd0" stroke-width="1.2"/></svg>
<svg class="a" style="left:36px;top:349.83500000000004px" width="10" height="9.6" viewBox="0 0 10 9.6"><rect x="0.5" y="0.5" width="9" height="8.4" fill="#fff" stroke="#333" stroke-width="0.9"/><path d="M0.5 2.6H9.5" stroke="#333" stroke-width="1.4"/><path d="M0.5 4.9H9.5M0.5 6.9H9.5M3.5 2.6V9M6.5 2.6V9" stroke="#444" stroke-width="0.75"/></svg>
<div class="t h" style="left:50.5px;top:348.8px;transform:scaleX(0.857);">film_actor</div>
<svg class="a" style="left:25px;top:363.47px" width="6" height="7" viewBox="0 0 6 7"><path d="M1.6 1.3L4 3.5L1.6 5.7" fill="none" stroke="#1c6fd0" stroke-width="1.2"/></svg>
<svg class="a" style="left:36px;top:361.67px" width="10" height="9.6" viewBox="0 0 10 9.6"><rect x="0.5" y="0.5" width="9" height="8.4" fill="#fff" stroke="#333" stroke-width="0.9"/><path d="M0.5 2.6H9.5" stroke="#333" stroke-width="1.4"/><path d="M0.5 4.9H9.5M0.5 6.9H9.5M3.5 2.6V9M6.5 2.6V9" stroke="#444" stroke-width="0.75"/></svg>
<div class="t h" style="left:50.5px;top:360.7px;transform:scaleX(0.870);">film_category</div>
<svg class="a" style="left:25px;top:375.30500000000006px" width="6" height="7" viewBox="0 0 6 7"><path d="M1.6 1.3L4 3.5L1.6 5.7" fill="none" stroke="#1c6fd0" stroke-width="1.2"/></svg>
<svg class="a" style="left:36px;top:373.50500000000005px" width="10" height="9.6" viewBox="0 0 10 9.6"><rect x="0.5" y="0.5" width="9" height="8.4" fill="#fff" stroke="#333" stroke-width="0.9"/><path d="M0.5 2.6H9.5" stroke="#333" stroke-width="1.4"/><path d="M0.5 4.9H9.5M0.5 6.9H9.5M3.5 2.6V9M6.5 2.6V9" stroke="#444" stroke-width="0.75"/></svg>
<div class="t h" style="left:50.5px;top:372.5px;transform:scaleX(0.905);">film_text</div>
<svg class="a" style="left:25px;top:387.14000000000004px" width="6" height="7" viewBox="0 0 6 7"><path d="M1.6 1.3L4 3.5L1.6 5.7" fill="none" stroke="#1c6fd0" stroke-width="1.2"/></svg>
<svg class="a" style="left:36px;top:385.34000000000003px" width="10" height="9.6" viewBox="0 0 10 9.6"><rect x="0.5" y="0.5" width="9" height="8.4" fill="#fff" stroke="#333" stroke-width="0.9"/><path d="M0.5 2.6H9.5" stroke="#333" stroke-width="1.4"/><path d="M0.5 4.9H9.5M0.5 6.9H9.5M3.5 2.6V9M6.5 2.6V9" stroke="#444" stroke-width="0.75"/></svg>
<div class="t h" style="left:50.5px;top:384.3px;transform:scaleX(0.892);">inventory</div>
<svg class="a" style="left:25px;top:398.975px" width="6" height="7" viewBox="0 0 6 7"><path d="M1.6 1.3L4 3.5L1.6 5.7" fill="none" stroke="#1c6fd0" stroke-width="1.2"/></svg>
<svg class="a" style="left:36px;top:397.175px" width="10" height="9.6" viewBox="0 0 10 9.6"><rect x="0.5" y="0.5" width="9" height="8.4" fill="#fff" stroke="#333" stroke-width="0.9"/><path d="M0.5 2.6H9.5" stroke="#333" stroke-width="1.4"/><path d="M0.5 4.9H9.5M0.5 6.9H9.5M3.5 2.6V9M6.5 2.6V9" stroke="#444" stroke-width="0.75"/></svg>
<div class="t h" style="left:50.5px;top:396.2px;transform:scaleX(0.846);">language</div>
<svg class="a" style="left:25px;top:410.81000000000006px" width="6" height="7" viewBox="0 0 6 7"><path d="M1.6 1.3L4 3.5L1.6 5.7" fill="none" stroke="#1c6fd0" stroke-width="1.2"/></svg>
<svg class="a" style="left:36px;top:409.01000000000005px" width="10" height="9.6" viewBox="0 0 10 9.6"><rect x="0.5" y="0.5" width="9" height="8.4" fill="#fff" stroke="#333" stroke-width="0.9"/><path d="M0.5 2.6H9.5" stroke="#333" stroke-width="1.4"/><path d="M0.5 4.9H9.5M0.5 6.9H9.5M3.5 2.6V9M6.5 2.6V9" stroke="#444" stroke-width="0.75"/></svg>
<div class="t h" style="left:50.5px;top:408.0px;transform:scaleX(0.884);">payment</div>
<svg class="a" style="left:25px;top:422.64500000000004px" width="6" height="7" viewBox="0 0 6 7"><path d="M1.6 1.3L4 3.5L1.6 5.7" fill="none" stroke="#1c6fd0" stroke-width="1.2"/></svg>
<svg class="a" style="left:36px;top:420.845px" width="10" height="9.6" viewBox="0 0 10 9.6"><rect x="0.5" y="0.5" width="9" height="8.4" fill="#fff" stroke="#333" stroke-width="0.9"/><path d="M0.5 2.6H9.5" stroke="#333" stroke-width="1.4"/><path d="M0.5 4.9H9.5M0.5 6.9H9.5M3.5 2.6V9M6.5 2.6V9" stroke="#444" stroke-width="0.75"/></svg>
<div class="t h" style="left:50.5px;top:419.8px;transform:scaleX(0.896);">rental</div>
<svg class="a" style="left:25px;top:434.48px" width="6" height="7" viewBox="0 0 6 7"><path d="M1.6 1.3L4 3.5L1.6 5.7" fill="none" stroke="#1c6fd0" stroke-width="1.2"/></svg>
<svg class="a" style="left:36px;top:432.68px" width="10" height="9.6" viewBox="0 0 10 9.6"><rect x="0.5" y="0.5" width="9" height="8.4" fill="#fff" stroke="#333" stroke-width="0.9"/><path d="M0.5 2.6H9.5" stroke="#333" stroke-width="1.4"/><path d="M0.5 4.9H9.5M0.5 6.9H9.5M3.5 2.6V9M6.5 2.6V9" stroke="#444" stroke-width="0.75"/></svg>
<div class="t h" style="left:50.5px;top:431.7px;transform:scaleX(0.833);">schedule</div>
<div class="a" style="left:3px;top:441.5px;width:111.5px;height:0px;"></div>
<div class="a" style="left:0px;top:454.6px;width:696px;height:20.4px;background:#f3f3f4"></div>
<div class="t s" style="left:5px;top:459.5px;transform:scaleX(0.800);color:#484848">Ready</div>
<div class="a" style="left:129px;top:80px;width:566px;height:374px;background:#f5f5f7;border:1px solid #dfe1ed"></div>
<div class="a" style="left:129px;top:61px;width:1px;height:19px;background:#dfe1ed"></div>
<div class="a" style="left:129px;top:61px;width:84.3px;height:1px;background:#dfe1ed"></div>
<div class="a" style="left:130px;top:62px;width:83.3px;height:18.2px;background:#f5f5f7"></div>
<div class="a" style="left:213.3px;top:61px;width:100.5px;height:19.7px;background:#c9def5"></div>
<div class="a" style="left:130px;top:80.2px;width:564px;height:0.9px;background:#d4d8ea"></div>
<svg class="a" style="left:136.3px;top:65.7px" width="10" height="10" viewBox="0 0 10 10"><circle cx="5" cy="5" r="3.6" fill="#e8e8ea" stroke="#66666a" stroke-width="1.6"/><path d="M5 5.2V2.6M4.8 5.2H7.2" stroke="#55555a" stroke-width="1"/><path d="M6.6 0.4L9.8 2.4L7.6 4Z" fill="#f5f5f7"/></svg>
<div class="t s" style="left:148.8px;top:65.0px;transform:scaleX(0.801);color:#333">Start Page</div>
<svg class="a" style="left:220.2px;top:65.4px" width="11" height="10.5" viewBox="0 0 11 10.5"><path d="M2.8 1H10V7" fill="none" stroke="#3a3a3a" stroke-width="0.9"/><rect x="0.8" y="2.8" width="7.6" height="6.6" fill="#dbe7f6" stroke="#333" stroke-width="1"/><path d="M2.2 5.2H7M2.2 7.2H7" stroke="#444" stroke-width="0.9"/></svg>
<div class="a" style="left:234px;top:68px;width:6.3px;height:6.3px;background:#2ec22e"></div>
<div class="t s b" style="left:244.5px;top:65.0px;transform:scaleX(0.900);color:#333">Query1.sql*</div>
<svg class="a" style="left:299.7px;top:67px" width="8" height="8" viewBox="0 0 8 8"><circle cx="4" cy="4" r="3.4" fill="#5a5a5e"/><path d="M2.8 2.8L5.2 5.2M5.2 2.8L2.8 5.2" stroke="#c9def5" stroke-width="0.8"/></svg>
<svg class="a" style="left:679.6px;top:67.8px" width="8" height="6" viewBox="0 0 8 6"><path d="M1.7 2.0H6.3L4 4.3Z" fill="#333"/></svg>
<svg class="a" style="left:130px;top:81px" width="553" height="174.3" viewBox="0 0 553 174.3"><rect width="553" height="175" fill="#fff"/><path d="M5.50 0V174M22.24 0V174M38.98 0V174M55.72 0V174M72.46 0V174M89.20 0V174M105.94 0V174M122.68 0V174M139.42 0V174M156.16 0V174M172.90 0V174M189.64 0V174M206.38 0V174M223.12 0V174M239.86 0V174M256.60 0V174M273.34 0V174M290.08 0V174M306.82 0V174M323.56 0V174M340.30 0V174M357.04 0V174M373.78 0V174M390.52 0V174M407.26 0V174M424.00 0V174M440.74 0V174M457.48 0V174M474.22 0V174M490.96 0V174M507.70 0V174M524.44 0V174M541.18 0V174M0 15.80H553M0 32.54H553M0 49.28H553M0 66.02H553M0 82.76H553M0 99.50H553M0 116.24H553M0 132.98H553M0 149.72H553M0 166.46H553" stroke="#f4f4f7" stroke-width="0.8" fill="none"/></svg>
<svg class="a" style="left:136px;top:87.5px" width="12" height="9" viewBox="0 0 12 9"><path d="M0.4 3.3H6.2M0.4 4.95H6.2M0.4 6.6H6.2M0.4 8.25H6.2" stroke="#2a2a2a" stroke-width="1.1" stroke-dasharray="1.1 0.45"/><path d="M8 0.3H10.5L10.2 5.8H8.3Z" fill="#222"/><rect x="8.2" y="6.7" width="2.1" height="1.8" fill="#222"/></svg>
<div class="t h" style="left:148.8px;top:85.8px;transform:scaleX(0.730);">SELECT</div>
<div class="a" style="left:683px;top:81px;width:10.5px;height:174.3px;background:#f3f3f5"></div>
<div class="a" style="left:683px;top:145.8px;width:10.5px;height:64px;background:#dcdce3"></div>
<svg class="a" style="left:685.5px;top:84.5px" width="6" height="5" viewBox="0 0 6 5"><path d="M0.6 4.2H5.4L3 0.8Z" fill="#555"/></svg>
<svg class="a" style="left:685.5px;top:247px" width="6" height="5" viewBox="0 0 6 5"><path d="M0.6 0.8H5.4L3 4.2Z" fill="#555"/></svg>
<div class="a" style="left:130px;top:255.3px;width:552.5px;height:12.7px;background:#f5f5f7"></div>
<div class="a" style="left:307.3px;top:255.8px;width:200px;height:11.4px;background:#dcdce3"></div>
<svg class="a" style="left:133.5px;top:258.3px" width="5" height="6" viewBox="0 0 5 6"><path d="M4.2 0.6V5.4L0.8 3Z" fill="#555"/></svg>
<svg class="a" style="left:674px;top:258.3px" width="5" height="6" viewBox="0 0 5 6"><path d="M0.8 0.6V5.4L4.2 3Z" fill="#555"/></svg>
<div class="a" style="left:683px;top:255.3px;width:10.5px;height:12.7px;background:#f5f5f7"></div>
<svg class="a" style="left:683px;top:255.5px" width="12" height="12" viewBox="0 0 12 12"><path d="M7 7.4L10.4 10.4" stroke="#c9962e" stroke-width="1.7" stroke-linecap="round"/><circle cx="4.6" cy="4.8" r="3.6" fill="#e3f2fc" stroke="#5f8fc0" stroke-width="1"/></svg>
<div class="a" style="left:240px;top:106px;width:86px;height:43px;background:#fff;border:1px solid #ced2e8;border-radius:1.5px;box-shadow:0 0 2px rgba(160,170,215,.5)"></div>
<div class="a" style="left:241px;top:107px;width:84px;height:9.3px;background:#f3f3f6"></div>
<svg class="a" style="left:242.1px;top:109.0px" width="6.2" height="6" viewBox="0 0 6.2 6"><rect x="0.2" y="0.2" width="5.8" height="5.5" fill="#3a3a3a"/><path d="M0.2 2H6M0.2 3.8H6M2.1 2V5.7M4.1 2V5.7" stroke="#d4d4d4" stroke-width="0.5"/></svg>
<div class="t d b" style="left:250.3px;top:105.9px;transform:scaleX(0.884);color:#222">category</div>
<svg class="a" style="left:319px;top:110.3px" width="4" height="3" viewBox="0 0 4 3"><path d="M0.2 2.6H3.8L2 0.4Z" fill="#222"/></svg>
<div class="t d" style="left:257px;top:114.8px;transform:scaleX(0.859);">*(All Columns)</div>
<svg class="a" style="left:242px;top:126.32999999999998px" width="6" height="4" viewBox="0 0 6 4"><path d="M0 2H3.4" stroke="#222" stroke-width="0.9"/><path d="M2.6 0.4L5.4 2L2.6 3.6Z" fill="#222"/></svg>
<div class="t d" style="left:257px;top:122.3px;transform:scaleX(0.843);">category_id</div>
<div class="t d" style="left:257px;top:129.9px;transform:scaleX(0.794);">name</div>
<div class="t d" style="left:257px;top:137.4px;transform:scaleX(0.843);">last_update</div>
<svg class="a" style="left:309px;top:133.3px" width="7" height="5" viewBox="0 0 7 5"><rect x="1.8" y="0.6" width="4.6" height="3.8" fill="none" stroke="#666" stroke-width="0.7"/><path d="M1.8 2.5H6.4M0 1.4H1.8M0 3.4H1.8" stroke="#666" stroke-width="0.6"/></svg>
<svg class="a" style="left:317.3px;top:133.3px" width="5" height="5" viewBox="0 0 5 5"><path d="M0.2 0.4H4.8L3 2.6V4.8L2 4.2V2.6Z" fill="#333"/></svg>
<div class="a" style="left:243px;top:170px;width:86px;height:42px;background:#fff;border:1px solid #ced2e8;border-radius:1.5px;box-shadow:0 0 2px rgba(160,170,215,.5)"></div>
<div class="a" style="left:244px;top:171px;width:84px;height:9.3px;background:#f3f3f6"></div>
<svg class="a" style="left:245.5px;top:172.8px" width="6.2" height="6" viewBox="0 0 6.2 6"><rect x="0.2" y="0.2" width="5.8" height="5.5" fill="#3a3a3a"/><path d="M0.2 2H6M0.2 3.8H6M2.1 2V5.7M4.1 2V5.7" stroke="#d4d4d4" stroke-width="0.5"/></svg>
<div class="t d b" style="left:253.70000000000002px;top:169.7px;transform:scaleX(0.941);color:#222">film_category</div>
<svg class="a" style="left:322.4px;top:174.1px" width="4" height="3" viewBox="0 0 4 3"><path d="M0.2 2.6H3.8L2 0.4Z" fill="#222"/></svg>
<div class="t d" style="left:260.4px;top:178.5px;transform:scaleX(0.859);">*(All Columns)</div>
<svg class="a" style="left:245.4px;top:189.92px" width="6" height="4" viewBox="0 0 6 4"><path d="M0 2H3.4" stroke="#222" stroke-width="0.9"/><path d="M2.6 0.4L5.4 2L2.6 3.6Z" fill="#222"/></svg>
<div class="t d" style="left:260.4px;top:185.9px;transform:scaleX(0.852);">film_id</div>
<svg class="a" style="left:245.4px;top:197.34px" width="6" height="4" viewBox="0 0 6 4"><path d="M0 2H3.4" stroke="#222" stroke-width="0.9"/><path d="M2.6 0.4L5.4 2L2.6 3.6Z" fill="#222"/></svg>
<div class="t d" style="left:260.4px;top:193.3px;transform:scaleX(0.843);">category_id</div>
<div class="t d" style="left:260.4px;top:200.8px;transform:scaleX(0.843);">last_update</div>
<div class="a" style="left:357px;top:137px;width:101px;height:87px;background:#fff;border:1px solid #ced2e8;border-radius:1.5px;box-shadow:0 0 2px rgba(160,170,215,.5)"></div>
<div class="a" style="left:358px;top:138px;width:99px;height:9.3px;background:#f3f3f6"></div>
<svg class="a" style="left:359.40000000000003px;top:139.60000000000002px" width="6.2" height="6" viewBox="0 0 6.2 6"><rect x="0.2" y="0.2" width="5.8" height="5.5" fill="#3a3a3a"/><path d="M0.2 2H6M0.2 3.8H6M2.1 2V5.7M4.1 2V5.7" stroke="#d4d4d4" stroke-width="0.5"/></svg>
<div class="t d b" style="left:367.6px;top:136.5px;transform:scaleX(0.923);color:#222">film</div>
<svg class="a" style="left:451.3px;top:140.9px" width="4" height="3" viewBox="0 0 4 3"><path d="M0.2 2.6H3.8L2 0.4Z" fill="#222"/></svg>
<div class="t d" style="left:374.3px;top:144.8px;transform:scaleX(0.859);">*(All Columns)</div>
<svg class="a" style="left:359.3px;top:156.33px" width="6" height="4" viewBox="0 0 6 4"><path d="M0 2H3.4" stroke="#222" stroke-width="0.9"/><path d="M2.6 0.4L5.4 2L2.6 3.6Z" fill="#222"/></svg>
<div class="t d" style="left:374.3px;top:152.3px;transform:scaleX(0.852);">film_id</div>
<div class="t d" style="left:374.3px;top:159.9px;transform:scaleX(0.882);">title</div>
<div class="t d" style="left:374.3px;top:167.4px;transform:scaleX(0.843);">description</div>
<div class="t d" style="left:374.3px;top:174.9px;transform:scaleX(0.808);">release_year</div>
<svg class="a" style="left:359.3px;top:186.45000000000002px" width="6" height="4" viewBox="0 0 6 4"><circle cx="1.5" cy="2" r="1.1" fill="none" stroke="#333" stroke-width="0.7"/><path d="M2.6 1.6H5.6M2.6 2.6H5.6" stroke="#333" stroke-width="0.6"/></svg>
<div class="t d" style="left:374.3px;top:182.5px;transform:scaleX(0.819);">language_id</div>
<svg class="a" style="left:359.3px;top:193.98000000000002px" width="6" height="4" viewBox="0 0 6 4"><circle cx="1.5" cy="2" r="1.1" fill="none" stroke="#333" stroke-width="0.7"/><path d="M2.6 1.6H5.6M2.6 2.6H5.6" stroke="#333" stroke-width="0.6"/></svg>
<div class="t d" style="left:374.3px;top:190.0px;transform:scaleX(0.841);">original_language_id</div>
<div class="t d" style="left:374.3px;top:197.5px;transform:scaleX(0.850);">rental_duration</div>
<div class="t d" style="left:374.3px;top:205.0px;transform:scaleX(0.843);">rental_rate</div>
<div class="t d" style="left:374.3px;top:212.6px;transform:scaleX(0.849);">length</div>
<svg class="a" style="left:443px;top:163.4px" width="7" height="5" viewBox="0 0 7 5"><rect x="1.8" y="0.6" width="4.6" height="3.8" fill="none" stroke="#666" stroke-width="0.7"/><path d="M1.8 2.5H6.4M0 1.4H1.8M0 3.4H1.8" stroke="#666" stroke-width="0.6"/></svg>
<svg class="a" style="left:444.5px;top:201.1px" width="5" height="5" viewBox="0 0 5 5"><path d="M0.2 0.4H4.8L3 2.6V4.8L2 4.2V2.6Z" fill="#333"/></svg>
<div class="a" style="left:452.5px;top:151.5px;width:2.4px;height:47px;background:#cbcbd2;border-radius:1px"></div>
<svg class="a" style="left:452.1px;top:219.5px" width="3" height="2" viewBox="0 0 3 2"><path d="M0.3 0.3L1.5 1.5L2.7 0.3" fill="none" stroke="#999" stroke-width="0.5"/></svg>
<div class="a" style="left:490px;top:87px;width:86px;height:72px;background:#fff;border:1px solid #ced2e8;border-radius:1.5px;box-shadow:0 0 2px rgba(160,170,215,.5)"></div>
<div class="a" style="left:491px;top:88px;width:84px;height:9.3px;background:#f3f3f6"></div>
<svg class="a" style="left:492.6px;top:89.1px" width="6.2" height="6" viewBox="0 0 6.2 6"><rect x="0.2" y="0.2" width="5.8" height="5.5" fill="#3a3a3a"/><path d="M0.2 2H6M0.2 3.8H6M2.1 2V5.7M4.1 2V5.7" stroke="#d4d4d4" stroke-width="0.5"/></svg>
<div class="t d b" style="left:500.8px;top:86.0px;transform:scaleX(0.904);color:#222">rental</div>
<svg class="a" style="left:569.5px;top:90.39999999999999px" width="4" height="3" viewBox="0 0 4 3"><path d="M0.2 2.6H3.8L2 0.4Z" fill="#222"/></svg>
<div class="t d" style="left:507.5px;top:94.7px;transform:scaleX(0.859);">*(All Columns)</div>
<svg class="a" style="left:492.5px;top:106.23px" width="6" height="4" viewBox="0 0 6 4"><path d="M0 2H3.4" stroke="#222" stroke-width="0.9"/><path d="M2.6 0.4L5.4 2L2.6 3.6Z" fill="#222"/></svg>
<div class="t d" style="left:507.5px;top:102.2px;transform:scaleX(0.786);">rental_id</div>
<div class="t d" style="left:507.5px;top:109.8px;transform:scaleX(0.853);">rental_date</div>
<svg class="a" style="left:492.5px;top:121.29px" width="6" height="4" viewBox="0 0 6 4"><circle cx="1.5" cy="2" r="1.1" fill="none" stroke="#333" stroke-width="0.7"/><path d="M2.6 1.6H5.6M2.6 2.6H5.6" stroke="#333" stroke-width="0.6"/></svg>
<div class="t d" style="left:507.5px;top:117.3px;transform:scaleX(0.861);">inventory_id</div>
<svg class="a" style="left:492.5px;top:128.82px" width="6" height="4" viewBox="0 0 6 4"><circle cx="1.5" cy="2" r="1.1" fill="none" stroke="#333" stroke-width="0.7"/><path d="M2.6 1.6H5.6M2.6 2.6H5.6" stroke="#333" stroke-width="0.6"/></svg>
<div class="t d" style="left:507.5px;top:124.8px;transform:scaleX(0.830);">customer_id</div>
<div class="t d" style="left:507.5px;top:132.3px;transform:scaleX(0.872);">return_date</div>
<svg class="a" style="left:492.5px;top:143.88px" width="6" height="4" viewBox="0 0 6 4"><circle cx="1.5" cy="2" r="1.1" fill="none" stroke="#333" stroke-width="0.7"/><path d="M2.6 1.6H5.6M2.6 2.6H5.6" stroke="#333" stroke-width="0.6"/></svg>
<div class="t d" style="left:507.5px;top:139.9px;transform:scaleX(0.866);">staff_id</div>
<div class="t d" style="left:507.5px;top:147.4px;transform:scaleX(0.849);">last_update</div>
<svg class="a" style="left:568.2px;top:105.8px" width="5.5" height="5" viewBox="0 0 5.5 5"><circle cx="1.5" cy="3.4" r="1" fill="none" stroke="#666" stroke-width="0.6"/><circle cx="4" cy="1.4" r="1" fill="none" stroke="#666" stroke-width="0.6"/><path d="M2.2 2.8L3.3 2" stroke="#666" stroke-width="0.6"/></svg>
<div class="a" style="left:490px;top:170px;width:86px;height:50px;background:#fff;border:1px solid #ced2e8;border-radius:1.5px;box-shadow:0 0 2px rgba(160,170,215,.5)"></div>
<div class="a" style="left:491px;top:171px;width:84px;height:9.3px;background:#f3f3f6"></div>
<svg class="a" style="left:492.6px;top:172.5px" width="6.2" height="6" viewBox="0 0 6.2 6"><rect x="0.2" y="0.2" width="5.8" height="5.5" fill="#3a3a3a"/><path d="M0.2 2H6M0.2 3.8H6M2.1 2V5.7M4.1 2V5.7" stroke="#d4d4d4" stroke-width="0.5"/></svg>
<div class="t d b" style="left:500.8px;top:169.4px;transform:scaleX(0.905);color:#222">inventory</div>
<svg class="a" style="left:569.5px;top:173.79999999999998px" width="4" height="3" viewBox="0 0 4 3"><path d="M0.2 2.6H3.8L2 0.4Z" fill="#222"/></svg>
<div class="t d" style="left:507.5px;top:178.6px;transform:scaleX(0.859);">*(All Columns)</div>
<svg class="a" style="left:492.5px;top:190.13px" width="6" height="4" viewBox="0 0 6 4"><path d="M0 2H3.4" stroke="#222" stroke-width="0.9"/><path d="M2.6 0.4L5.4 2L2.6 3.6Z" fill="#222"/></svg>
<div class="t d" style="left:507.5px;top:186.1px;transform:scaleX(0.861);">inventory_id</div>
<svg class="a" style="left:492.5px;top:197.66px" width="6" height="4" viewBox="0 0 6 4"><circle cx="1.5" cy="2" r="1.1" fill="none" stroke="#333" stroke-width="0.7"/><path d="M2.6 1.6H5.6M2.6 2.6H5.6" stroke="#333" stroke-width="0.6"/></svg>
<div class="t d" style="left:507.5px;top:193.7px;transform:scaleX(0.868);">film_id</div>
<svg class="a" style="left:492.5px;top:205.19px" width="6" height="4" viewBox="0 0 6 4"><circle cx="1.5" cy="2" r="1.1" fill="none" stroke="#333" stroke-width="0.7"/><path d="M2.6 1.6H5.6M2.6 2.6H5.6" stroke="#333" stroke-width="0.6"/></svg>
<div class="t d" style="left:507.5px;top:201.2px;transform:scaleX(0.847);">store_id</div>
<div class="t d" style="left:507.5px;top:208.7px;transform:scaleX(0.849);">last_update</div>
<svg class="a" style="left:0;top:0" width="696" height="475" viewBox="0 0 696 475"><rect x="248.50" y="118.25" width="5.1" height="5.1" fill="#fff" stroke="#96969c" stroke-width="0.7"/><rect x="248.50" y="125.78" width="5.1" height="5.1" fill="#fff" stroke="#96969c" stroke-width="0.7"/><rect x="248.50" y="133.31" width="5.1" height="5.1" fill="#fff" stroke="#96969c" stroke-width="0.7"/><path d="M249.60 135.96l1.1 1.2l1.9 -2.6" fill="none" stroke="#555" stroke-width="0.7"/><rect x="248.50" y="140.84" width="5.1" height="5.1" fill="#fff" stroke="#96969c" stroke-width="0.7"/><rect x="251.90" y="181.95" width="5.1" height="5.1" fill="#fff" stroke="#96969c" stroke-width="0.7"/><rect x="251.90" y="189.37" width="5.1" height="5.1" fill="#fff" stroke="#96969c" stroke-width="0.7"/><rect x="251.90" y="196.79" width="5.1" height="5.1" fill="#fff" stroke="#96969c" stroke-width="0.7"/><rect x="251.90" y="204.21" width="5.1" height="5.1" fill="#fff" stroke="#96969c" stroke-width="0.7"/><rect x="365.80" y="148.25" width="5.1" height="5.1" fill="#fff" stroke="#96969c" stroke-width="0.7"/><rect x="365.80" y="155.78" width="5.1" height="5.1" fill="#fff" stroke="#96969c" stroke-width="0.7"/><rect x="365.80" y="163.31" width="5.1" height="5.1" fill="#fff" stroke="#96969c" stroke-width="0.7"/><path d="M366.90 165.96l1.1 1.2l1.9 -2.6" fill="none" stroke="#555" stroke-width="0.7"/><rect x="365.80" y="170.84" width="5.1" height="5.1" fill="#fff" stroke="#96969c" stroke-width="0.7"/><rect x="365.80" y="178.37" width="5.1" height="5.1" fill="#fff" stroke="#96969c" stroke-width="0.7"/><rect x="365.80" y="185.90" width="5.1" height="5.1" fill="#fff" stroke="#96969c" stroke-width="0.7"/><rect x="365.80" y="193.43" width="5.1" height="5.1" fill="#fff" stroke="#96969c" stroke-width="0.7"/><rect x="365.80" y="200.96" width="5.1" height="5.1" fill="#fff" stroke="#96969c" stroke-width="0.7"/><rect x="365.80" y="208.49" width="5.1" height="5.1" fill="#fff" stroke="#96969c" stroke-width="0.7"/><rect x="365.80" y="216.02" width="5.1" height="5.1" fill="#fff" stroke="#96969c" stroke-width="0.7"/><rect x="499.00" y="98.15" width="5.1" height="5.1" fill="#fff" stroke="#96969c" stroke-width="0.7"/><rect x="499.00" y="105.68" width="5.1" height="5.1" fill="#fff" stroke="#96969c" stroke-width="0.7"/><path d="M500.10 108.33l1.1 1.2l1.9 -2.6" fill="none" stroke="#555" stroke-width="0.7"/><rect x="499.00" y="113.21" width="5.1" height="5.1" fill="#fff" stroke="#96969c" stroke-width="0.7"/><rect x="499.00" y="120.74" width="5.1" height="5.1" fill="#fff" stroke="#96969c" stroke-width="0.7"/><rect x="499.00" y="128.27" width="5.1" height="5.1" fill="#fff" stroke="#96969c" stroke-width="0.7"/><rect x="499.00" y="135.80" width="5.1" height="5.1" fill="#fff" stroke="#96969c" stroke-width="0.7"/><rect x="499.00" y="143.33" width="5.1" height="5.1" fill="#fff" stroke="#96969c" stroke-width="0.7"/><rect x="499.00" y="150.86" width="5.1" height="5.1" fill="#fff" stroke="#96969c" stroke-width="0.7"/><rect x="499.00" y="182.05" width="5.1" height="5.1" fill="#fff" stroke="#96969c" stroke-width="0.7"/><rect x="499.00" y="189.58" width="5.1" height="5.1" fill="#fff" stroke="#96969c" stroke-width="0.7"/><rect x="499.00" y="197.11" width="5.1" height="5.1" fill="#fff" stroke="#96969c" stroke-width="0.7"/><rect x="499.00" y="204.64" width="5.1" height="5.1" fill="#fff" stroke="#96969c" stroke-width="0.7"/><rect x="499.00" y="212.17" width="5.1" height="5.1" fill="#fff" stroke="#96969c" stroke-width="0.7"/><path d="M236 128.1H231.8L234.8 198.9H245" stroke="#2a2a2a" stroke-width="0.9" fill="none"/><path d="M235.3 125.5L240 128.1L235.3 130.7Z" fill="#111"/><path d="M230.0 163.6L233.3 160.29999999999998L236.60000000000002 163.6L233.3 166.9Z" fill="#fff" stroke="#333" stroke-width="0.7"/><path d="M357.3 158.3H348.3L336.2 191.6H333" stroke="#2a2a2a" stroke-width="0.9" fill="none"/><path d="M333.4 189L328.7 191.6L333.4 194.2Z" fill="#111"/><path d="M339.2 175.1L342.5 171.79999999999998L345.8 175.1L342.5 178.4Z" fill="#fff" stroke="#333" stroke-width="0.7"/><path d="M490.5 123.3H482.1V191.6H487" stroke="#2a2a2a" stroke-width="0.9" fill="none"/><path d="M485.8 189L490.5 191.6L485.8 194.2Z" fill="#111"/><path d="M479.09999999999997 157.4L482.4 154.1L485.7 157.4L482.4 160.70000000000002Z" fill="#fff" stroke="#333" stroke-width="0.7"/><path d="M490.5 199.2H483L465 157.8H462" stroke="#2a2a2a" stroke-width="0.9" fill="none"/><path d="M463 155.2L458.2 157.8L463 160.4Z" fill="#111"/><path d="M470.7 179L474 175.7L477.3 179L474 182.3Z" fill="#fff" stroke="#333" stroke-width="0.7"/></svg>
<div class="a" style="left:130px;top:268.2px;width:564px;height:6.8px;background:repeating-linear-gradient(135deg,#e4e4ea 0,#e4e4ea 1px,#eeeef2 1px,#eeeef2 2.2px)"></div>
<svg class="a" style="left:409.4px;top:270px" width="6" height="4" viewBox="0 0 6 4"><path d="M0.6 0.6L3 3L5.4 0.6" fill="none" stroke="#333" stroke-width="1.3"/></svg>
<div class="a" style="left:130px;top:275px;width:564px;height:159px;background:#f5f5f7"></div>
<div class="a" style="left:130px;top:294px;width:564px;height:1px;background:#e3e4ee"></div>
<div class="t h g" style="left:138px;top:279.0px;transform:scaleX(0.838);color:#3c3c3c">Selection</div>
<div class="t h g" style="left:185.5px;top:279.0px;transform:scaleX(0.803);color:#3c3c3c">Joins</div>
<div class="t h g" style="left:218.5px;top:279.0px;transform:scaleX(0.847);color:#3c3c3c">Where</div>
<div class="t h g" style="left:257.7px;top:279.0px;transform:scaleX(0.830);color:#1979ca">Group By</div>
<div class="a" style="left:249.3px;top:292.8px;width:47.5px;height:2px;background:#1979ca"></div>
<div class="t h g" style="left:304.8px;top:279.0px;transform:scaleX(0.846);color:#3c3c3c">Having</div>
<div class="t h g" style="left:344.3px;top:279.0px;transform:scaleX(0.876);color:#3c3c3c">Order By</div>
<div class="t h g" style="left:138.5px;top:302.0px;transform:scaleX(0.801);color:#3c3c3c"><u>C</u>olumns</div>
<div class="t h g" style="left:416.5px;top:302.0px;transform:scaleX(0.829);color:#3c3c3c"><u>G</u>rouped By</div>
<div class="a" style="left:138.5px;top:317.5px;width:250px;height:108px;background:#fff;border:1px solid #cfd2e3"></div>
<div class="a" style="left:139.5px;top:318.3px;width:237px;height:14.3px;background:#0a78d2"></div>
<div class="t h w" style="left:142.5px;top:319.8px;transform:scaleX(0.895);">rental.rental_id</div>
<div class="t h" style="left:142.5px;top:334.7px;transform:scaleX(0.905);">rental.rental_date</div>
<div class="t h" style="left:142.5px;top:349.3px;transform:scaleX(0.900);">rental.inventory_id</div>
<div class="t h" style="left:142.5px;top:363.8px;transform:scaleX(0.880);">rental.customer_id</div>
<div class="t h" style="left:142.5px;top:378.6px;transform:scaleX(0.910);">rental.return_date</div>
<div class="t h" style="left:142.5px;top:393.1px;transform:scaleX(0.922);">rental.staff_id</div>
<div class="t h" style="left:142.5px;top:407.8px;transform:scaleX(0.893);">rental.last_update</div>
<div class="a" style="left:376.5px;top:318.5px;width:11px;height:106px;background:#f6f6f8"></div>
<div class="a" style="left:376.5px;top:330px;width:11px;height:19.3px;background:#dcdce3"></div>
<svg class="a" style="left:379px;top:322px" width="6" height="5" viewBox="0 0 6 5"><path d="M0.6 4.2H5.4L3 0.8Z" fill="#555"/></svg>
<svg class="a" style="left:379px;top:416px" width="6" height="5" viewBox="0 0 6 5"><path d="M0.6 0.8H5.4L3 4.2Z" fill="#555"/></svg>
<div class="a" style="left:394.3px;top:323.2px;width:16.6px;height:16.4px;background:#fff;border:1px solid #dcdde8"></div>
<div class="a" style="left:394.3px;top:345px;width:16.6px;height:16.4px;background:#fff;border:1px solid #dcdde8"></div>
<svg class="a" style="left:400px;top:328.3px" width="5" height="6" viewBox="0 0 5 6"><path d="M1 0.6V5.4L4.2 3Z" fill="#222"/></svg>
<svg class="a" style="left:400px;top:350.2px" width="5" height="6" viewBox="0 0 5 6"><path d="M4 0.6V5.4L0.8 3Z" fill="#222"/></svg>
<div class="a" style="left:416.7px;top:317.5px;width:250.3px;height:74.2px;background:#fff;border:1px solid #cfd2e3"></div>
<div class="a" style="left:417.7px;top:318.3px;width:248.5px;height:14.3px;background:#0a78d2"></div>
<div class="t h w" style="left:420.5px;top:319.8px;transform:scaleX(0.892);">film.title</div>
<div class="t h" style="left:420.5px;top:334.4px;transform:scaleX(0.896);">category.name</div>
<div class="a" style="left:672.2px;top:323px;width:16.8px;height:16.7px;background:#fff;border:1px solid #dcdde8"></div>
<div class="a" style="left:672.2px;top:345.2px;width:16.8px;height:16.7px;background:#fff;border:1px solid #dcdde8"></div>
<svg class="a" style="left:677px;top:328.4px" width="7" height="5" viewBox="0 0 7 5"><path d="M0.2 4.3H6.8L3.5 0.9Z" fill="#9a9aa0"/></svg>
<svg class="a" style="left:677px;top:351.2px" width="7" height="5" viewBox="0 0 7 5"><path d="M0.2 0.7H6.8L3.5 4.1Z" fill="#222"/></svg>
<div class="t h g" style="left:416.5px;top:395.8px;transform:scaleX(0.836);color:#3c3c3c"><u>E</u>xpression</div>
<div class="a" style="left:416.5px;top:411.4px;width:250.3px;height:14.2px;background:#fff;border:1px solid #cfd2e3"></div>
<div class="a" style="left:672px;top:408.8px;width:16.8px;height:16.8px;background:#fff;border:1px solid #dcdde8"></div>
<svg class="a" style="left:674.6px;top:412px" width="11" height="10" viewBox="0 0 11 10"><path d="M1.8 3.4H4.4L5.2 4.4H10V9.2H1.8Z" fill="#d4d4d8" stroke="#86868c" stroke-width="0.9"/><path d="M0.2 2.4H4M2.1 0.5V4.3" stroke="#4a4a4a" stroke-width="1"/></svg>
<div class="a" style="left:130px;top:434px;width:564px;height:19.5px;background:#eeeef2"></div>
<div class="a" style="left:130px;top:434px;width:77.5px;height:19.5px;background:#d0d0d6"></div>
<svg class="a" style="left:135.5px;top:438.5px" width="11" height="11" viewBox="0 0 11 11"><path d="M2.6 1H10V7.6" fill="none" stroke="#444" stroke-width="0.8"/><rect x="0.8" y="2.8" width="7.6" height="7" fill="#d0d0d6" stroke="#444" stroke-width="0.9"/><path d="M2.2 5H7M2.2 7.4H7" stroke="#666" stroke-width="0.9"/></svg>
<div class="t s b" style="left:149.8px;top:437.6px;transform:scaleX(0.857);color:#3c3c3c">Query Builder</div>
<div class="a" style="left:208.8px;top:436px;width:1px;height:16px;background:#dedee6"></div>
<svg class="a" style="left:217.5px;top:438.5px" width="11" height="11" viewBox="0 0 11 11"><path d="M4 1.4H9.6Q8.4 1.4 8.4 2.8V9.4H2.2" fill="none" stroke="#222" stroke-width="1.2"/><path d="M4 1.4Q2.8 1.4 2.8 2.8V7.6M0.8 9.4H6.4Q7.4 9.4 7.4 8.2" fill="none" stroke="#222" stroke-width="1.2"/></svg>
<div class="t s" style="left:231.5px;top:437.6px;transform:scaleX(0.879);color:#3c3c3c">Text</div>
<div class="a" style="left:255.8px;top:436px;width:1px;height:16px;background:#dedee6"></div>
<svg class="a" style="left:265.8px;top:440px" width="7" height="7" viewBox="0 0 7 7"><path d="M3.5 0.2V6.8M0.2 3.5H6.8" stroke="#222" stroke-width="1.3"/></svg>
<div class="a" style="left:361.3px;top:436px;width:1px;height:16px;background:#dedee6"></div>
<div class="a" style="left:372px;top:440.5px;width:6.3px;height:6.3px;background:#2ec22e"></div>
<div class="t s" style="left:383.8px;top:437.6px;transform:scaleX(0.903);color:#3c3c3c">Development</div>
<div class="a" style="left:439.5px;top:436px;width:1px;height:16px;background:#dedee6"></div>
<svg class="a" style="left:449.5px;top:438.3px" width="7" height="10" viewBox="0 0 7 10"><path d="M2 0.6V3M5 0.6V3" stroke="#27a52c" stroke-width="1"/><path d="M0.8 3H6.2V5Q6.2 6.6 4.6 6.8H2.4Q0.8 6.6 0.8 5Z" fill="#27a52c"/><path d="M3.5 6.6V9.6" stroke="#27a52c" stroke-width="1.2"/></svg>
<div class="t s" style="left:461.8px;top:437.6px;transform:scaleX(0.893);color:#3c3c3c">Connected.</div>
<div class="a" style="left:511.5px;top:436px;width:1px;height:16px;background:#dedee6"></div>
<div class="t s" style="left:519.3px;top:437.6px;transform:scaleX(0.891);color:#3c3c3c">demo-mysql (9.1)</div>
<div class="a" style="left:590.8px;top:436px;width:1px;height:16px;background:#dedee6"></div>
<div class="t s" style="left:597.8px;top:437.6px;transform:scaleX(0.989);color:#3c3c3c">tw</div>
<div class="a" style="left:614.0px;top:436px;width:1px;height:16px;background:#dedee6"></div>
<div class="t s" style="left:620.8px;top:437.6px;transform:scaleX(0.850);color:#3c3c3c">sakila</div>
<div class="a" style="left:648.3px;top:436px;width:1px;height:16px;background:#dedee6"></div>
<svg class="a" style="left:656px;top:438.5px" width="10.5" height="10.5" viewBox="0 0 10.5 10.5"><rect x="0.7" y="0.7" width="8.6" height="8.6" fill="#fff" stroke="#2a2a2a" stroke-width="1"/><rect x="0.7" y="5" width="8.6" height="4.3" fill="#2a2a2a"/></svg>
<div class="a" style="left:672px;top:434px;width:22px;height:19.5px;background:#d0d0d6"></div>
<svg class="a" style="left:678.8px;top:438.6px" width="10.5" height="10.5" viewBox="0 0 10.5 10.5"><rect x="0.7" y="0.7" width="8.6" height="8.4" fill="#f3f3f5" stroke="#4a4a4a" stroke-width="1"/></svg>
<div class="t s" style="left:555.3px;top:458.8px;transform:scaleX(0.829);color:#484848">Ln 1</div>
<div class="t s" style="left:579px;top:458.8px;transform:scaleX(0.829);color:#484848">Col 1</div>
<div class="t s" style="left:606.3px;top:458.8px;transform:scaleX(0.825);color:#484848">Ch 1</div>
<svg class="a" style="left:687px;top:466px" width="8" height="8" viewBox="0 0 8 8"><path d="M6.5 1.5V2.5M6.5 4V5M6.5 6.5V7.5M4 4V5M4 6.5V7.5M1.5 6.5V7.5" stroke="#b0b0b8" stroke-width="1"/></svg>
</body></html>
